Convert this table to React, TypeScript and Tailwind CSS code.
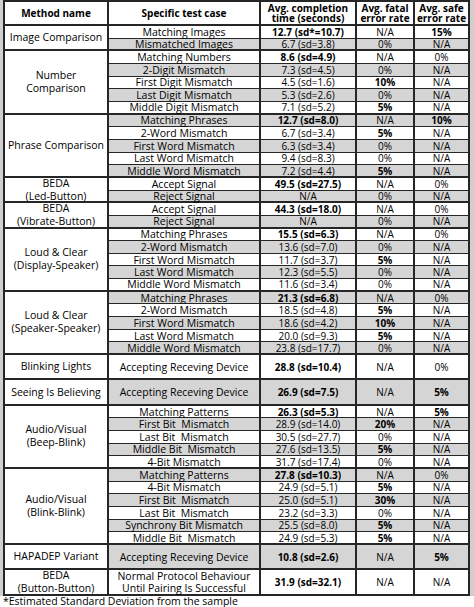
import React from "react";

interface Row {
  c: string;
  t: string;
  tb?: boolean;
  f: string;
  fb?: boolean;
  s: string;
  sb?: boolean;
  tall?: boolean;
}

interface Group {
  method: string[];
  rows: Row[];
}

const groups: Group[] = [
  {
    method: ["Image Comparison"],
    rows: [
      { c: "Matching Images", t: "12.7 (sd*=10.7)", tb: true, f: "N/A", s: "15%", sb: true },
      { c: "Mismatched Images", t: "6.7 (sd=3.8)", f: "0%", s: "N/A" },
    ],
  },
  {
    method: ["Number", "Comparison"],
    rows: [
      { c: "Matching Numbers", t: "8.6 (sd=4.9)", tb: true, f: "N/A", s: "0%" },
      { c: "2-Digit Mismatch", t: "7.3 (sd=4.5)", f: "0%", s: "N/A" },
      { c: "First Digit Mismatch", t: "4.5 (sd=1.6)", f: "10%", fb: true, s: "N/A" },
      { c: "Last Digit Mismatch", t: "5.3 (sd=2.6)", f: "0%", s: "N/A" },
      { c: "Middle Digit Mismatch", t: "7.1 (sd=5.2)", f: "5%", fb: true, s: "N/A" },
    ],
  },
  {
    method: ["Phrase Comparison"],
    rows: [
      { c: "Matching Phrases", t: "12.7 (sd=8.0)", tb: true, f: "N/A", s: "10%", sb: true },
      { c: "2-Word Mismatch", t: "6.7 (sd=3.4)", f: "5%", fb: true, s: "N/A" },
      { c: "First Word Mismatch", t: "6.3 (sd=3.4)", f: "0%", s: "N/A" },
      { c: "Last Word Mismatch", t: "9.4 (sd=8.3)", f: "0%", s: "N/A" },
      { c: "Middle Word Mismatch", t: "7.2 (sd=4.4)", f: "5%", fb: true, s: "N/A" },
    ],
  },
  {
    method: ["BEDA", "(Led-Button)"],
    rows: [
      { c: "Accept Signal", t: "49.5 (sd=27.5)", tb: true, f: "N/A", s: "0%" },
      { c: "Reject Signal", t: "N/A", f: "0%", s: "N/A" },
    ],
  },
  {
    method: ["BEDA", "(Vibrate-Button)"],
    rows: [
      { c: "Accept Signal", t: "44.3 (sd=18.0)", tb: true, f: "N/A", s: "0%" },
      { c: "Reject Signal", t: "N/A", f: "0%", s: "N/A" },
    ],
  },
  {
    method: ["Loud & Clear", "(Display-Speaker)"],
    rows: [
      { c: "Matching Phrases", t: "15.5 (sd=6.3)", tb: true, f: "N/A", s: "0%" },
      { c: "2-Word Mismatch", t: "13.6 (sd=7.0)", f: "0%", s: "N/A" },
      { c: "First Word Mismatch", t: "11.7 (sd=3.7)", f: "5%", fb: true, s: "N/A" },
      { c: "Last Word Mismatch", t: "12.3 (sd=5.5)", f: "0%", s: "N/A" },
      { c: "Middle Word Mismatch", t: "11.6 (sd=3.4)", f: "0%", s: "N/A" },
    ],
  },
  {
    method: ["Loud & Clear", "(Speaker-Speaker)"],
    rows: [
      { c: "Matching Phrases", t: "21.3 (sd=6.8)", tb: true, f: "N/A", s: "0%" },
      { c: "2-Word Mismatch", t: "18.5 (sd=4.8)", f: "5%", fb: true, s: "N/A" },
      { c: "First Word Mismatch", t: "18.6 (sd=4.2)", f: "10%", fb: true, s: "N/A" },
      { c: "Last Word Mismatch", t: "20.0 (sd=9.3)", f: "5%", fb: true, s: "N/A" },
      { c: "Middle Word Mismatch", t: "23.8 (sd=17.7)", f: "0%", s: "N/A" },
    ],
  },
  {
    method: ["Blinking Lights"],
    rows: [{ c: "Accepting Receving Device", t: "28.8 (sd=10.4)", tb: true, f: "N/A", s: "0%", tall: true }],
  },
  {
    method: ["Seeing Is Believing"],
    rows: [{ c: "Accepting Receving Device", t: "26.9 (sd=7.5)", tb: true, f: "N/A", s: "5%", sb: true, tall: true }],
  },
  {
    method: ["Audio/Visual", "(Beep-Blink)"],
    rows: [
      { c: "Matching Patterns", t: "26.3 (sd=5.3)", tb: true, f: "N/A", s: "5%", sb: true },
      { c: "First Bit  Mismatch", t: "28.9 (sd=14.0)", f: "20%", fb: true, s: "N/A" },
      { c: "Last Bit  Mismatch", t: "30.5 (sd=27.7)", f: "0%", s: "N/A" },
      { c: "Middle Bit  Mismatch", t: "27.6 (sd=13.5)", f: "5%", fb: true, s: "N/A" },
      { c: "4-Bit Mismatch", t: "31.7 (sd=17.4)", f: "0%", s: "N/A" },
    ],
  },
  {
    method: ["Audio/Visual", "(Blink-Blink)"],
    rows: [
      { c: "Matching Patterns", t: "27.8 (sd=10.3)", tb: true, f: "N/A", s: "0%" },
      { c: "4-Bit Mismatch", t: "24.9 (sd=5.1)", f: "5%", fb: true, s: "N/A" },
      { c: "First Bit  Mismatch", t: "25.0 (sd=5.1)", f: "30%", fb: true, s: "N/A" },
      { c: "Last Bit  Mismatch", t: "23.2 (sd=3.3)", f: "0%", s: "N/A" },
      { c: "Synchrony Bit Mismatch", t: "25.5 (sd=8.0)", f: "5%", fb: true, s: "N/A" },
      { c: "Middle Bit  Mismatch", t: "24.9 (sd=5.3)", f: "5%", fb: true, s: "N/A" },
    ],
  },
  {
    method: ["HAPADEP Variant"],
    rows: [{ c: "Accepting Receving Device", t: "10.8 (sd=2.6)", tb: true, f: "N/A", s: "5%", sb: true, tall: true }],
  },
  {
    method: ["BEDA", "(Button-Button)"],
    rows: [
      {
        c: "Normal Protocol Behaviour\nUntil Pairing Is Successful",
        t: "31.9 (sd=32.1)",
        tb: true,
        f: "N/A",
        s: "N/A",
        tall: true,
      },
    ],
  },
];

const spanClass: Record<number, string> = {
  1: "row-span-1",
  2: "row-span-2",
  5: "row-span-5",
  6: "row-span-6",
};

const cell = "flex items-center justify-center text-center whitespace-pre leading-[10px] border-r-2 border-[#262626]";

export default function App() {
  let idx = 0;
  return (
    <div className="w-[474px] h-[607px] bg-white text-black overflow-hidden" style={{ fontFamily: '"Open Sans", "Noto Sans", sans-serif' }}>
      <div className="bg-[#cfcfcf] pl-[3px] pr-[4px]">
        {/* header */}
        <div className="grid grid-cols-[106px_152px_96px_58px_55px] h-[26px] bg-white border-t-2 border-b-2 border-[#262626] text-[10px] font-bold">
          <div className={`${cell} border-l-2`}>Method name</div>
          <div className={cell}>Specific test case</div>
          <div className={cell}>{"Avg. completion\ntime (seconds)"}</div>
          <div className={cell}>{"Avg. fatal\nerror rate"}</div>
          <div className={cell}>{"Avg. safe\nerror rate"}</div>
        </div>
        {/* body */}
        <div className="grid grid-cols-[106px_152px_96px_58px_55px] auto-rows-[12.67px] text-[10px]">
          {groups.map((g, gi) => {
            const units = g.rows.reduce((n, r) => n + (r.tall ? 2 : 1), 0);
            return (
              <React.Fragment key={gi}>
                <div className={`${cell} ${spanClass[units]} border-l-2 border-b-2 bg-white leading-[13px] text-[10.5px]`}>
                  {g.method.join("\n")}
                </div>
                {g.rows.map((r, ri) => {
                  const shade = idx % 2 === 1 ? "bg-[#d5d5d5]" : "bg-white";
                  idx++;
                  const last = ri === g.rows.length - 1;
                  const b = last ? "border-b-2" : "border-b";
                  const span = r.tall ? "row-span-2" : "row-span-1";
                  const base = `${cell} ${shade} ${b} ${span}`;
                  return (
                    <React.Fragment key={ri}>
                      <div className={`${base} text-[10.5px] ${r.tall ? "leading-[12px]" : ""}`}>{r.c}</div>
                      <div className={`${base} ${r.tb ? "font-bold" : ""}`}>{r.t}</div>
                      <div className={`${base} ${r.fb ? "font-bold" : ""}`}>{r.f}</div>
                      <div className={`${base} ${r.sb ? "font-bold" : ""}`}>{r.s}</div>
                    </React.Fragment>
                  );
                })}
              </React.Fragment>
            );
          })}
        </div>
      </div>
      <div className="pl-[3px] text-[10.5px] leading-[11px] whitespace-nowrap">*Estimated Standard Deviation from the sample</div>
    </div>
  );
}
